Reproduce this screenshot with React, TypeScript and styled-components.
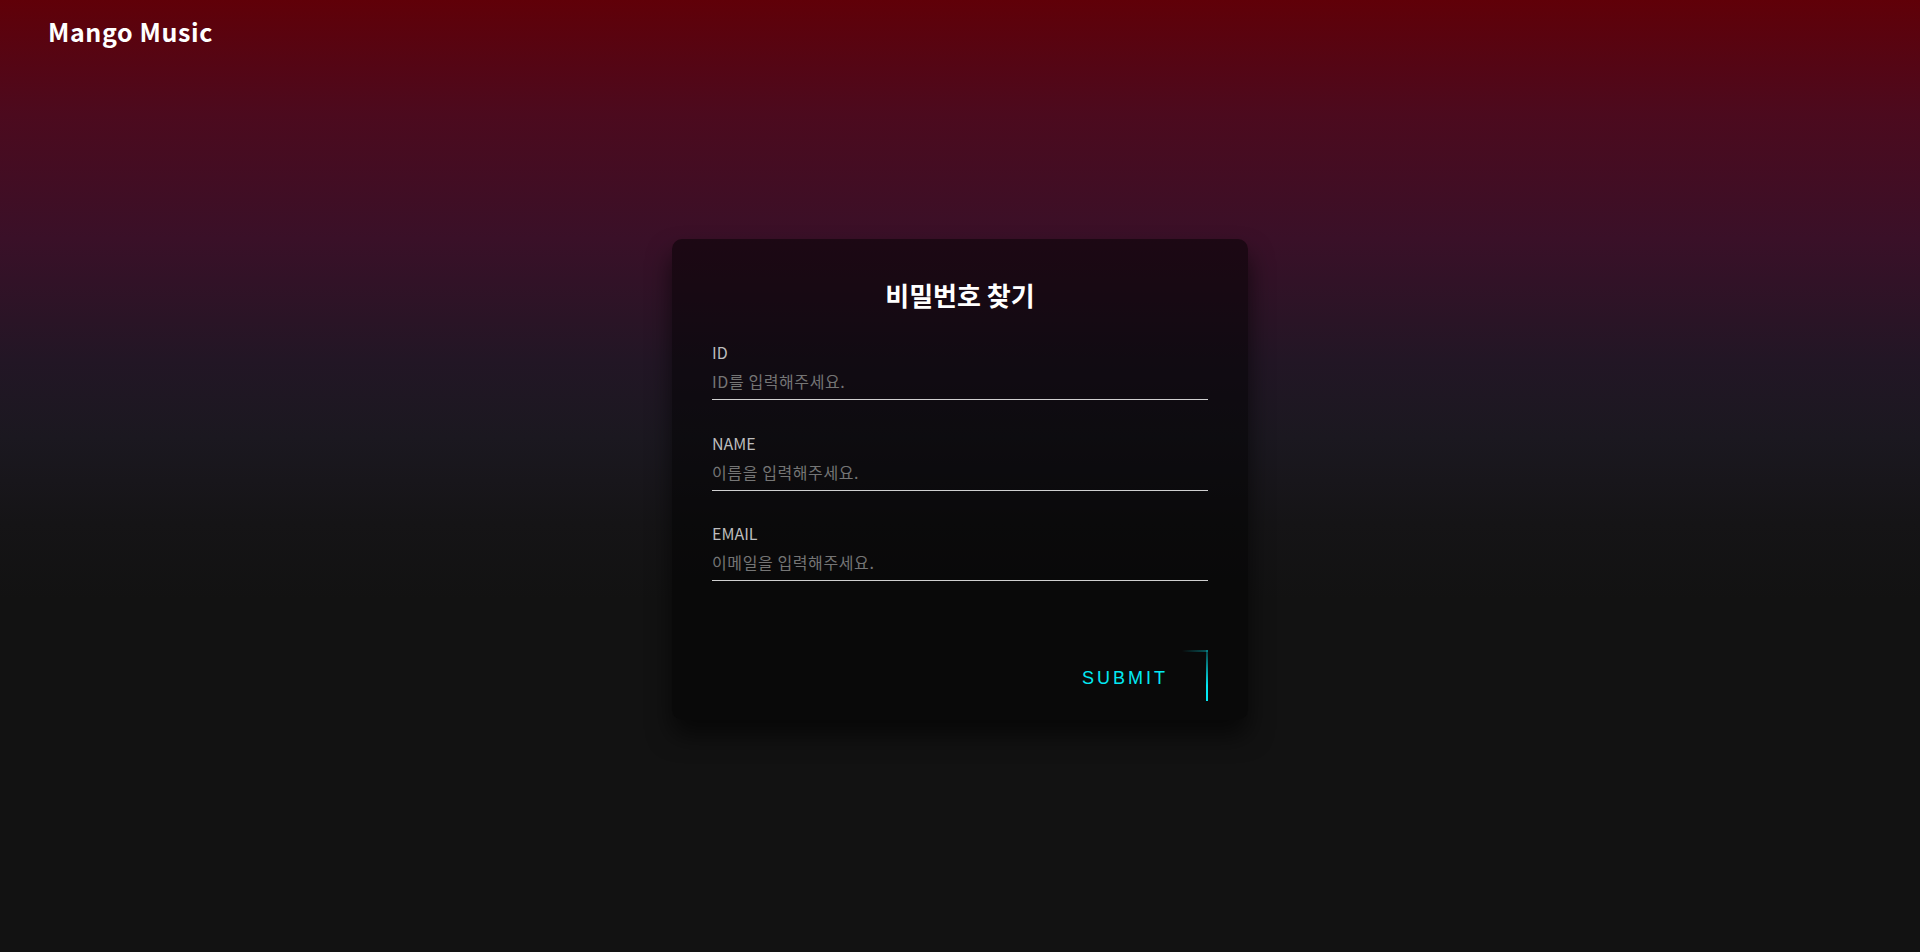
import { createGlobalStyle } from "styled-components";
import styled from "styled-components";

const GlobalStyle = createGlobalStyle`
  html, body {
    margin: 0;
    padding: 0;
  }
  body {
    font-family: "Noto Sans CJK KR", "Noto Sans", sans-serif;
    background: #121212;
  }
  * {
    box-sizing: border-box;
  }
`;

export const Page = styled.div`
  min-height: 100vh;
  width: 100%;
  display: flex;
  flex-direction: column;
  background: linear-gradient(
    180deg,
    #600008 0%,
    #4c0a1e 12%,
    #3a1028 25%,
    #221625 38%,
    #1b1820 46%,
    #151416 55%,
    #121212 63%,
    #121212 100%
  );
`;

export const Header = styled.header`
  height: 62px;
  display: flex;
  align-items: center;
  padding: 0 48px;
`;

export const Logo = styled.h1`
  margin: 0;
  font-size: 25px;
  letter-spacing: 0.6px;
  font-weight: 700;
  color: #fff;
`;

export const Main = styled.main`
  display: flex;
  justify-content: center;
  padding-top: 177px;
`;

export const Card = styled.form`
  width: 576px;
  padding: 40px 40px 19px;
  background: rgba(0, 0, 0, 0.5);
  border-radius: 10px;
  box-shadow: 0 15px 25px rgba(0, 0, 0, 0.6);
  display: flex;
  flex-direction: column;
`;

export const Title = styled.h2`
  margin: 0 0 30px;
  padding: 0;
  font-size: 26px;
  line-height: 32px;
  font-weight: 700;
  color: #fff;
  text-align: center;
`;

export const Field = styled.label`
  display: flex;
  flex-direction: column;
  margin-bottom: 31.5px;
`;

export const FieldLabel = styled.span`
  font-size: 16px;
  line-height: 22px;
  color: #bdbdbd;
`;

export const Input = styled.input`
  width: 100%;
  padding: 7px 0;
  font-family: inherit;
  font-size: 16px;
  letter-spacing: 0.6px;
  line-height: 22px;
  color: #fff;
  border: none;
  border-bottom: 1px solid #d0d0d0;
  outline: none;
  background: transparent;

  &::placeholder {
    color: #757575;
  }
`;

export const ButtonRow = styled.div`
  display: flex;
  justify-content: flex-end;
  margin-top: 37px;
`;

export const SubmitButton = styled.button`
  position: relative;
  padding: 18px 40px 12px 20px;
  background: transparent;
  border: none;
  font-family: "Liberation Sans", Arial, sans-serif;
  font-size: 18px;
  line-height: 21px;
  letter-spacing: 3px;
  color: #03e9f4;
  cursor: pointer;
  overflow: hidden;
`;

export const EdgeTop = styled.span`
  position: absolute;
  top: 0;
  right: 0;
  width: 26px;
  height: 2px;
  background: linear-gradient(90deg, transparent, rgba(3, 233, 244, 0.35));
`;

export const EdgeRight = styled.span`
  position: absolute;
  top: 0;
  right: 0;
  width: 2px;
  height: 100%;
  background: linear-gradient(180deg, rgba(3, 233, 244, 0.25), #03e9f4 70%);
`;

const fields = [
  { label: "ID", placeholder: "ID를 입력해주세요.", type: "text" },
  { label: "NAME", placeholder: "이름을 입력해주세요.", type: "text" },
  { label: "EMAIL", placeholder: "이메일을 입력해주세요.", type: "email" },
];

export default function App() {
  return (
    <>
      <GlobalStyle />
      <Page>
        <Header>
          <Logo>Mango Music</Logo>
        </Header>
        <Main>
          <Card onSubmit={(e) => e.preventDefault()}>
            <Title>비밀번호 찾기</Title>
            {fields.map((f) => (
              <Field key={f.label}>
                <FieldLabel>{f.label}</FieldLabel>
                <Input type={f.type} placeholder={f.placeholder} />
              </Field>
            ))}
            <ButtonRow>
              <SubmitButton type="submit">
                <EdgeTop />
                <EdgeRight />
                SUBMIT
              </SubmitButton>
            </ButtonRow>
          </Card>
        </Main>
      </Page>
    </>
  );
}
